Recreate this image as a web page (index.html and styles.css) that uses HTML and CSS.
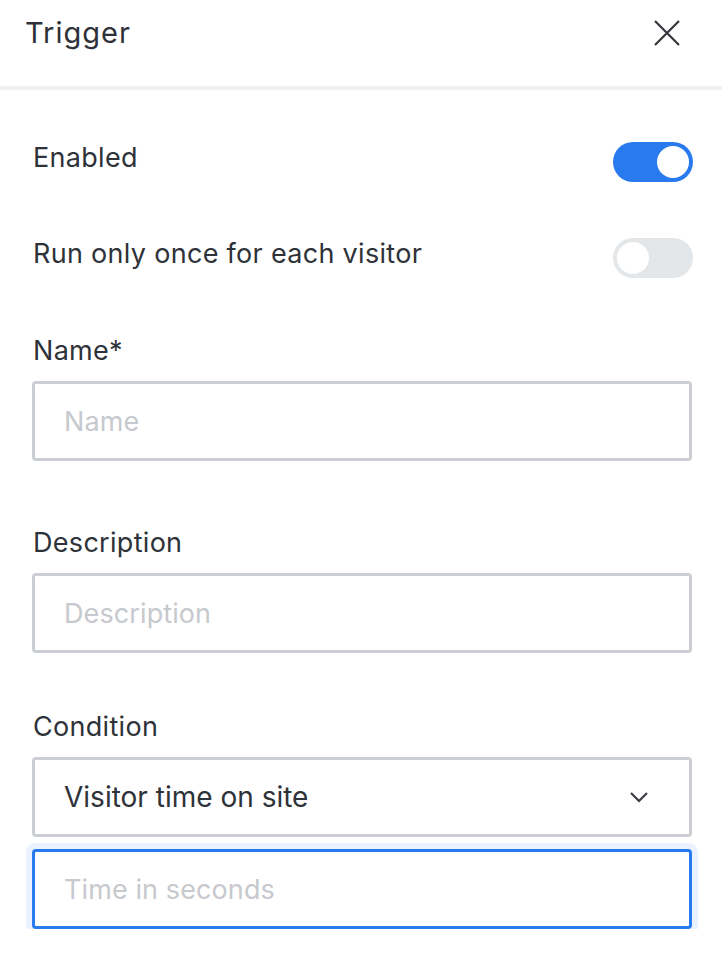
FILE: index.html
```html
<!DOCTYPE html>
<html>
<head>
<meta charset="utf-8">
<link rel="stylesheet" href="styles.css">
</head>
<body>
<div class="panel">
  <header class="header">
    <h1 class="title">Trigger</h1>
    <button class="close" aria-label="Close">
      <svg width="26" height="26" viewBox="0 0 26 26"><path d="M1 1L25 25M25 1L1 25" stroke="#33363b" stroke-width="2.2" fill="none"/></svg>
    </button>
  </header>
  <main class="body">
    <div class="row">
      <span class="label">Enabled</span>
      <span class="toggle on"><span class="knob"></span></span>
    </div>
    <div class="row">
      <span class="label">Run only once for each visitor</span>
      <span class="toggle"><span class="knob"></span></span>
    </div>
    <div class="field first">
      <label class="label">Name*</label>
      <input class="input" placeholder="Name">
    </div>
    <div class="field second">
      <label class="label">Description</label>
      <input class="input" placeholder="Description">
    </div>
    <div class="field">
      <label class="label">Condition</label>
      <div class="select">
        <span>Visitor time on site</span>
        <svg width="20" height="12" viewBox="0 0 20 12"><path d="M2 2L10 10L18 2" stroke="#3a3d42" stroke-width="2.2" fill="none"/></svg>
      </div>
      <input class="input focused" placeholder="Time in seconds">
    </div>
  </main>
</div>
</body>
</html>
```
FILE: styles.css
```css
html, body { margin: 0; padding: 0; background: #fff; }
body { font-family: Inter, "Noto Sans", sans-serif; color: #2e3239; }
.panel { width: 722px; }
.header {
  height: 86px;
  border-bottom: 4px solid #f0f1f3;
  display: flex;
  align-items: flex-start;
  justify-content: space-between;
}
.title {
  margin: 0;
  padding: 13px 0 0 25px;
  font-family: Inter, sans-serif;
  font-weight: 400;
  font-size: 29px;
  letter-spacing: 1px;
  color: #2e3137;
  line-height: 40px;
}
.close {
  border: 0; background: none; padding: 0;
  margin: 20px 42px 0 0;
  width: 26px; height: 26px;
  display: block;
}
.close svg { display: block; }
.body { padding: 52px 30px 0 33px; }
.row {
  display: flex;
  justify-content: space-between;
  align-items: center;
  height: 40px;
  margin-bottom: 56px;
}
.label { font-size: 27px; letter-spacing: 0.3px; line-height: 34px; display: block; }
.row .label { margin-top: -8px; }
.toggle {
  width: 80px; height: 40px; border-radius: 20px;
  background: #e4e7ea;
  position: relative;
  display: block;
  margin-right: -1px;
}
.toggle.on { background: #2a7aef; }
.knob {
  position: absolute; top: 4px; left: 4px;
  width: 32px; height: 32px; border-radius: 50%;
  background: #fff;
}
.toggle.on .knob { left: 44px; }
.field.first { margin-bottom: 65px; }
.field.second { margin-bottom: 57px; }
.field .label { margin-bottom: 13px; }
.input, .select {
  box-sizing: border-box;
  width: 660px; height: 80px;
  margin-left: -1px;
  border: 3px solid #cbced2;
  border-radius: 4px;
  font-family: Inter, sans-serif;
  font-size: 27px;
  letter-spacing: 0.1px;
  padding: 0 29px;
  color: #2e3239;
  outline: none;
  display: block;
}
.input::placeholder { color: #c6c9cd; }
.select {
  display: flex; align-items: center; justify-content: space-between;
  padding-right: 40px;
  margin-bottom: 12px;
  font-size: 28px;
  letter-spacing: 0;
}
.input.focused {
  border-color: #2a7aef;
  box-shadow: 0 0 0 6px #e9f2fe;
}
```
